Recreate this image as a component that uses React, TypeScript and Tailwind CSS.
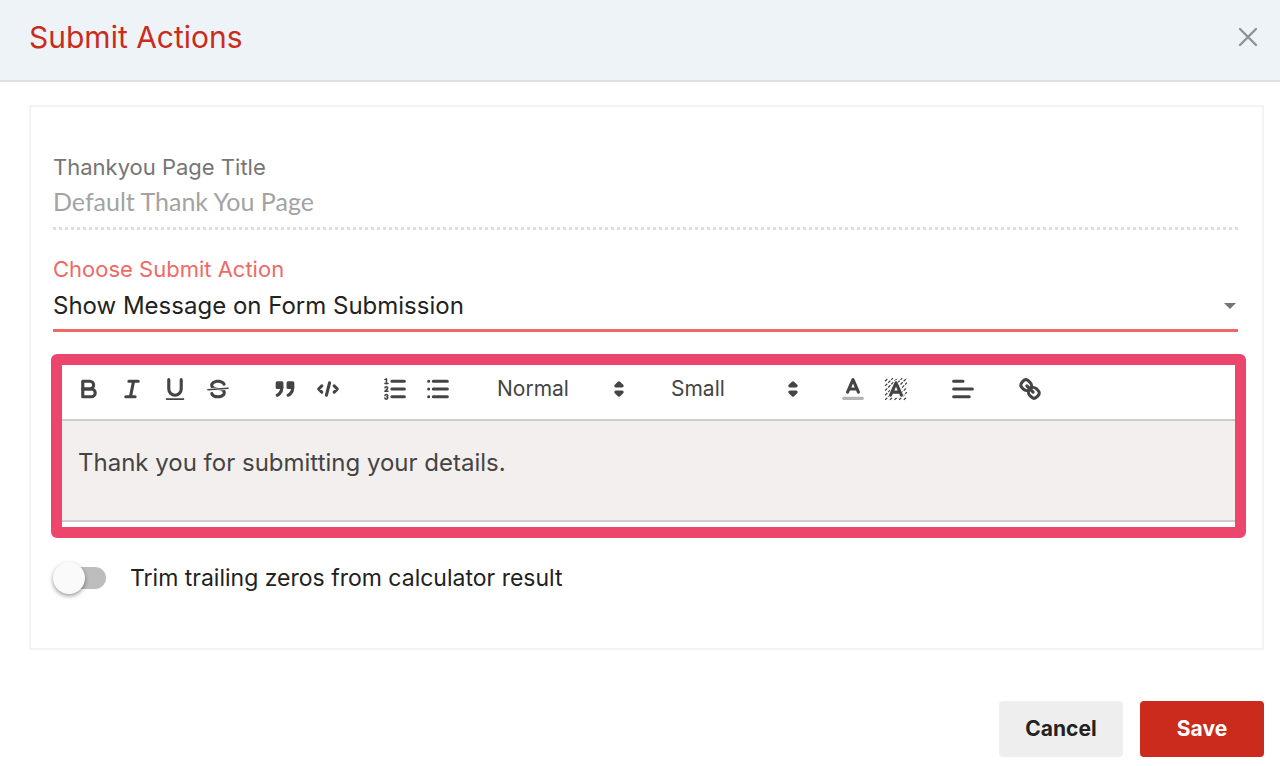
import { useState } from "react";
import type { ReactNode } from "react";

const ACTIONS = [
  "Show Message on Form Submission",
  "Redirect to URL",
  "Show Thank You Page",
];

export default function App() {
  const [title, setTitle] = useState("");
  const [action, setAction] = useState(ACTIONS[0]);
  const [message, setMessage] = useState(
    "Thank you for submitting your details."
  );
  const [trim, setTrim] = useState(false);

  return (
    <div className="min-h-screen bg-white font-['Inter',sans-serif] text-[#222]">
      {/* Header */}
      <header className="flex h-[82px] items-center justify-between border-b-2 border-[#e0e0e0] bg-[#eef3f7] pb-1.5 pl-[29px] pr-[22px]">
        <h1 className="text-[30px] leading-9 text-[#cb2b1d]">
          Submit Actions
        </h1>
        <button type="button" aria-label="Close">
          <svg
            viewBox="0 0 20 20"
            className="h-5 w-5 stroke-[#8e9296]"
            strokeWidth="2.4"
            strokeLinecap="round"
          >
            <path d="M2 2l16 16M18 2L2 18" />
          </svg>
        </button>
      </header>

      <main className="pb-2 pl-[29px] pr-4 pt-[23px]">
        {/* Panel */}
        <div className="border-2 border-[#f3f3f3] pb-[54px] pl-5 pr-4 pt-11">
          <div className="pl-0.5 pr-2">
            <label
              htmlFor="title"
              className="block text-[22px] leading-8 text-[#757575]"
            >
              Thankyou Page Title
            </label>
            <input
              id="title"
              type="text"
              value={title}
              onChange={(e) => setTitle(e.target.value)}
              placeholder="Default Thank You Page"
              className="block h-[47px] w-full border-b-[3px] border-dotted border-[#dedede] pb-2 font-['Lato',sans-serif] text-[25px] outline-none placeholder:text-[#a3a3a3]"
            />

            <label
              htmlFor="action"
              className="mt-[23px] block text-[22px] leading-8 text-[#ee6a66]"
            >
              Choose Submit Action
            </label>
            <div className="relative">
              <select
                id="action"
                value={action}
                onChange={(e) => setAction(e.target.value)}
                className="block h-[47px] w-full appearance-none border-b-[3px] border-[#ec6a65] pb-0.5 text-2xl outline-none"
              >
                {ACTIONS.map((a) => (
                  <option key={a}>{a}</option>
                ))}
              </select>
              <svg
                viewBox="0 0 12 6"
                className="pointer-events-none absolute right-0.5 top-[18px] h-1.5 w-3 fill-[#757575]"
              >
                <path d="M0 0h12L6 6z" />
              </svg>
            </div>
          </div>

          {/* Editor */}
          <div className="mt-[22px] rounded-md border-[11px] border-[#ec466c] bg-white pb-[5px]">
            <Toolbar />
            <textarea
              aria-label="Message"
              value={message}
              onChange={(e) => setMessage(e.target.value)}
              className="block h-[101px] w-full resize-none border-b-2 border-[#ccc] bg-[#f3efee] px-4 pt-6 text-2xl leading-9 text-[#444] outline-none"
            />
          </div>

          <label className="mt-6 flex items-center gap-6 pl-0.5">
            <input
              type="checkbox"
              role="switch"
              checked={trim}
              onChange={(e) => setTrim(e.target.checked)}
              className="
                relative h-8 w-[53px] shrink-0 appearance-none
                before:absolute before:inset-y-[5px] before:left-2 before:right-0
                before:rounded-full before:bg-[#bdbdbd]
                after:absolute after:left-0 after:top-0 after:h-8 after:w-8
                after:rounded-full after:bg-[#fafafa]
                after:shadow-[0_2px_4px_rgba(0,0,0,0.4)]
                checked:after:left-[22px]
              "
            />
            <span className="text-[23px] leading-8">
              Trim trailing zeros from calculator result
            </span>
          </label>
        </div>

        {/* Footer */}
        <div className="mt-[51px] flex justify-end gap-[17px]">
          <button
            type="button"
            className="h-14 w-[124px] rounded-[4px] bg-[#eee] text-[21px] font-bold text-[#222]"
          >
            Cancel
          </button>
          <button
            type="button"
            className="h-14 w-[124px] rounded-[4px] bg-[#cb2b1d] text-[21px] font-bold text-white"
          >
            Save
          </button>
        </div>
      </main>
    </div>
  );
}

/* ================= TOOLBAR ================= */

function Toolbar() {
  return (
    <div className="flex h-14 items-center gap-6 border-b-2 border-[#ccc] px-[5px] pb-1.5">
      <div className="flex">
        <ToolButton label="Bold">
          <path d="M5,4H9.5A2.5,2.5,0,0,1,12,6.5v0A2.5,2.5,0,0,1,9.5,9H5V4Z" />
          <path d="M5,9h5.5A2.5,2.5,0,0,1,13,11.5v0A2.5,2.5,0,0,1,10.5,14H5V9Z" />
        </ToolButton>
        <ToolButton label="Italic">
          <path d="M7,4H13M5,14H11M8,14L10,4" />
        </ToolButton>
        <ToolButton label="Underline">
          <path d="M5,3V9a4.012,4.012,0,0,0,4,4H9a4.012,4.012,0,0,0,4-4V3" />
          <rect className="fill-[#444] stroke-none" x="3" y="15" width="12" height="1" rx="0.5" />
        </ToolButton>
        <ToolButton label="Strike">
          <path strokeWidth="1" d="M15.5,8.5L2.5,9.5" />
          <path
            className="fill-[#444] stroke-none"
            d="M9.007,8C6.542,7.791,6,7.519,6,6.5,6,5.792,7.283,5,9,5c1.571,0,2.765.679,2.969,1.309a1,1,0,0,0,1.9-.617C13.356,4.106,11.354,3,9,3,6.2,3,4,4.538,4,6.5a3.2,3.2,0,0,0,.5,1.843Z"
          />
          <path
            className="fill-[#444] stroke-none"
            d="M8.984,10C11.457,10.208,12,10.479,12,11.5c0,0.708-1.283,1.5-3,1.5-1.571,0-2.765-.679-2.969-1.309a1,1,0,1,0-1.9.617C4.644,13.894,6.646,15,9,15c2.8,0,5-1.538,5-3.5a3.2,3.2,0,0,0-.5-1.843Z"
          />
        </ToolButton>
      </div>

      <div className="flex">
        <ToolButton label="Blockquote">
          <rect className="fill-[#444]" x="4" y="5" width="3" height="3" />
          <rect className="fill-[#444]" x="11" y="5" width="3" height="3" />
          <path className="fill-[#444]" d="M7,8c0,4.031-3,5-3,5" />
          <path className="fill-[#444]" d="M14,8c0,4.031-3,5-3,5" />
        </ToolButton>
        <ToolButton label="Code">
          <path d="M5,7L3,9L5,11M13,7L15,9L13,11M10,5L8,13" />
        </ToolButton>
      </div>

      <div className="flex">
        <ToolButton label="Ordered list">
          <path d="M7,4H15M7,9H15M7,14H15" />
          <path strokeWidth="1" d="M2.5,5.5H4.5" />
          <path
            className="fill-[#444] stroke-none"
            d="M3.5,6A0.5,0.5,0,0,1,3,5.5V3.085l-0.276.138A0.5,0.5,0,0,1,2.053,3c-0.124-.247-0.023-0.324.224-0.447l1-.5A0.5,0.5,0,0,1,4,2.5v3A0.5,0.5,0,0,1,3.5,6Z"
          />
          <path strokeWidth="1" d="M4.5,10.5h-2c0-.234,1.85-1.076,1.85-2.234A0.959,0.959,0,0,0,2.5,8.156" />
          <path
            strokeWidth="1"
            d="M2.5,14.846a0.959,0.959,0,0,0,1.85-.109A0.7,0.7,0,0,0,3.75,14a0.688,0.688,0,0,0,.6-0.736,0.959,0.959,0,0,0-1.85-.109"
          />
        </ToolButton>
        <ToolButton label="Bullet list">
          <path d="M6,4H15M6,9H15M6,14H15M3,4H3M3,9H3M3,14H3" />
        </ToolButton>
      </div>

      <Picker label="Heading" options={["Normal", "Heading 1", "Heading 2"]} />
      <Picker label="Size" options={["Small", "Large", "Huge"]} />

      <div className="flex">
        <ToolButton label="Text color">
          <path className="stroke-[#b5b5b5]" d="M3,15H15" />
          <path d="M5.5,11L9,3L12.5,11M11.63,9H6.38" />
        </ToolButton>
        <ToolButton label="Background color">
          <path
            strokeWidth="0.8"
            strokeDasharray="2 0.8"
            strokeLinecap="butt"
            d="M2,4L4,2M2,7L7,2M2,10L10,2M2,13L13,2M2,16L16,2M5,16L16,5M8,16L16,8M11,16L16,11M14,16L16,14"
          />
          <path className="fill-white stroke-white" strokeWidth="3" d="M5.5,13L9,5L12.5,13Z" />
          <path d="M5.5,13L9,5L12.5,13M11.63,11H6.38" />
        </ToolButton>
      </div>

      <ToolButton label="Align">
        <path d="M3,9H15M3,14H13M3,4H9" />
      </ToolButton>

      <ToolButton label="Link">
        <path d="M7,7L11,11" />
        <path d="M8.9,4.577a3.476,3.476,0,0,1,.36,4.679A3.476,3.476,0,0,1,4.577,8.9C3.185,7.5,2.035,6.4,4.217,4.217S7.5,3.185,8.9,4.577Z" />
        <path d="M13.423,9.1a3.476,3.476,0,0,0-4.679-.36,3.476,3.476,0,0,0,.36,4.679c1.392,1.392,2.5,2.542,4.679.36S14.815,10.5,13.423,9.1Z" />
      </ToolButton>
    </div>
  );
}

function ToolButton({
  label,
  children,
}: {
  label: string;
  children: ReactNode;
}) {
  return (
    <button
      type="button"
      aria-label={label}
      className="flex h-9 w-[43px] shrink-0 items-center justify-center"
    >
      <svg
        viewBox="0 0 18 18"
        className="h-7 w-7 fill-none stroke-[#444]"
        strokeWidth="2"
        strokeLinecap="round"
        strokeLinejoin="round"
      >
        {children}
      </svg>
    </button>
  );
}

function Picker({ label, options }: { label: string; options: string[] }) {
  return (
    <div className="relative w-[150px] shrink-0">
      <select
        aria-label={label}
        className="h-9 w-full appearance-none pl-3.5 text-[21px] text-[#444] outline-none"
      >
        {options.map((o) => (
          <option key={o}>{o}</option>
        ))}
      </select>
      <svg
        viewBox="0 0 18 18"
        className="pointer-events-none absolute right-0 top-1 h-7 w-7 fill-[#444] stroke-[#444]"
        strokeWidth="2"
        strokeLinejoin="round"
      >
        <path d="M7,11L9,13L11,11ZM7,7L9,5L11,7Z" />
      </svg>
    </div>
  );
}
